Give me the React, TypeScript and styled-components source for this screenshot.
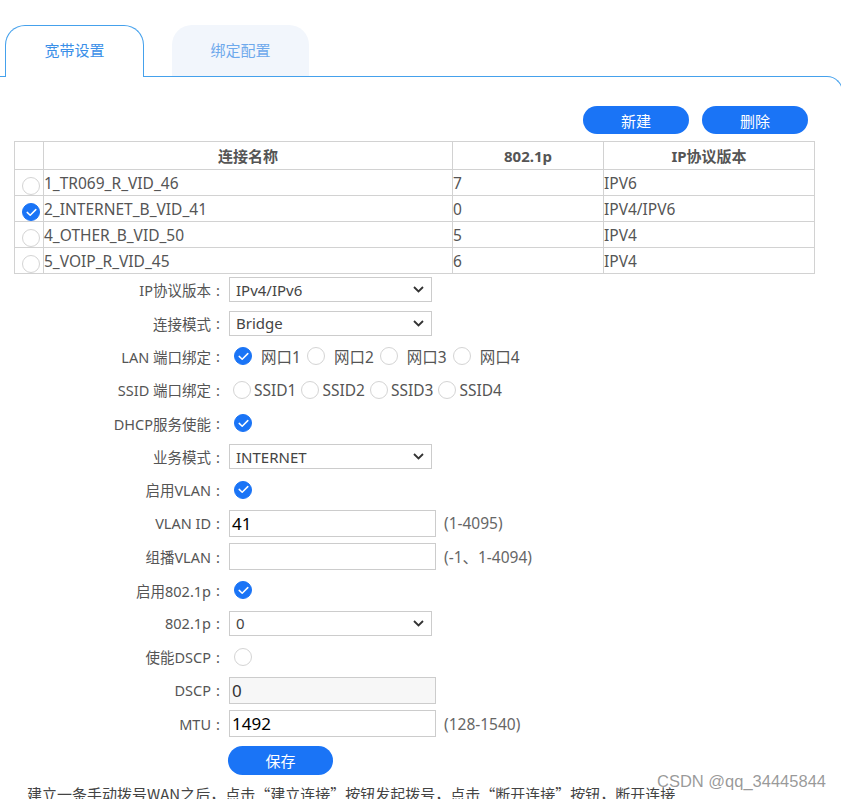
import * as React from 'react';
import styled, { createGlobalStyle } from 'styled-components';

const GlobalStyle = createGlobalStyle`
	html, body {
		margin: 0;
		padding: 0;
		background: #fff;
		overflow-x: hidden;
	}
	body {
		font-family: "Noto Sans", "Noto Sans CJK SC", sans-serif;
		font-size: 14px;
		color: #555;
	}
`;

const Page = styled.div`
	position: relative;
	padding-top: 25px;
	height: 799px;
	overflow: hidden;
`;

const TabBar = styled.div`
	display: flex;
	gap: 28px;
	padding-left: 5px;
	position: relative;
	z-index: 1;
	margin-bottom: -1px;
`;

const Tab = styled.div<{ active?: boolean }>`
	box-sizing: border-box;
	width: ${p => (p.active ? '139px' : '137px')};
	height: ${p => (p.active ? '52px' : '51px')};
	display: flex;
	align-items: center;
	justify-content: center;
	border-radius: 20px 20px 0 0;
	font-family: "Noto Sans CJK SC", sans-serif;
	font-size: 15px;
	color: ${p => (p.active ? '#3a8fe8' : '#6ea9ec')};
	background: ${p => (p.active ? '#fff' : '#f2f6fc')};
	border: ${p => (p.active ? '1px solid #45a1ec' : 'none')};
	border-bottom: none;
	padding-bottom: ${p => (p.active ? '4px' : '2px')};
`;

const Panel = styled.div`
	border-top: 1px solid #45a1ec;
	border-right: 1px solid #45a1ec;
	border-top-right-radius: 16px;
	margin-right: -2px;
	padding-top: 29px;
`;

const Toolbar = styled.div`
	display: flex;
	justify-content: flex-end;
	gap: 13px;
	padding-right: 34px;
`;

const BlueButton = styled.button`
	width: 106px;
	height: 28px;
	border: none;
	border-radius: 14px;
	background: #1a74f6;
	color: #fff;
	font-family: "Noto Sans CJK SC", sans-serif;
	font-size: 15px;
	padding: 0;
	cursor: pointer;
`;

const Table = styled.table`
	margin: 7px 0 0 14px;
	width: 800px;
	border-collapse: collapse;
	table-layout: fixed;
	color: #555;

	th, td {
		border: 1px solid #d2d2d2;
		padding: 0;
	}
	th {
		height: 27px;
		font-weight: bold;
		text-align: center;
		font-size: 15px;
	}
	td {
		height: 25px;
		text-align: left;
		font-size: 15.5px;
		vertical-align: middle;
	}
`;

const RadioCell = styled.td`
	vertical-align: bottom !important;
`;

const Circle = styled.span<{ checked?: boolean }>`
	box-sizing: border-box;
	display: inline-flex;
	align-items: center;
	justify-content: center;
	flex: none;
	width: 18px;
	height: 18px;
	border-radius: 50%;
	border: 1px solid ${p => (p.checked ? '#1a74f6' : '#d4d4d4')};
	background: ${p => (p.checked ? '#1a74f6' : '#fff')};
`;

const TableCircle = styled(Circle)`
	display: flex;
	margin: 0 0 0 7px;
`;

const Form = styled.div`
	display: flex;
	flex-direction: column;
	margin-top: -1px;
`;

const Row = styled.div`
	display: grid;
	grid-template-columns: 224px 1fr;
	column-gap: 5px;
	align-items: center;
	height: 33.38px;
`;

const Label = styled.div`
	display: flex;
	justify-content: flex-end;
	align-items: center;
	color: #555;
	font-size: 14.5px;
	white-space: nowrap;
`;

const Colon = styled.span`
	display: inline-block;
	width: 12px;
	text-align: center;
	margin-left: 1px;
`;

const Control = styled.div`
	display: flex;
	align-items: center;
`;

const SelectBox = styled.div`
	box-sizing: border-box;
	width: 203px;
	height: 25px;
	border: 1px solid #cccccc;
	display: flex;
	align-items: center;
	justify-content: space-between;
	padding: 0 7px 0 6px;
	font-size: 15px;
	color: #444;
	background: #fff;
`;

const TextInput = styled.div<{ disabled?: boolean }>`
	box-sizing: border-box;
	width: 207px;
	height: 27px;
	border: 1px solid #cccccc;
	background: ${p => (p.disabled ? '#f7f7f7' : '#fff')};
	display: flex;
	align-items: center;
	padding-left: 2px;
	font-size: 17px;
	color: ${p => (p.disabled ? '#333' : '#000')};
`;

const Hint = styled.span`
	margin-left: 8px;
	color: #666;
	font-size: 15.5px;
`;

const Options = styled.div<{ lead: number; textGap: number; itemGap: number }>`
	display: flex;
	align-items: center;
	padding-left: ${p => p.lead}px;
	gap: ${p => p.itemGap}px;

	label {
		display: flex;
		align-items: center;
		gap: ${p => p.textGap}px;
		color: #555;
		font-size: 15.5px;
	}
`;

const SaveRow = styled.div`
	padding: 6px 0 0 228px;
`;

const SaveButton = styled(BlueButton)`
	width: 105px;
	height: 29px;
	border-radius: 15px;
`;

const Note = styled.div`
	margin: 8px 0 0 27px;
	color: #444;
	font-family: "Noto Sans CJK SC", sans-serif;
	font-size: 15px;
	white-space: nowrap;
`;

const Watermark = styled.div`
	position: absolute;
	right: 15px;
	top: 772px;
	color: rgba(120, 120, 120, 0.75);
	font-family: "Liberation Sans", sans-serif;
	font-size: 16.5px;
`;

const Check = () => (
	<svg width="11" height="9" viewBox="0 0 11 9">
		<path d="M1.2 4.4 L4.2 7.2 L9.8 1.6" fill="none" stroke="#fff" strokeWidth="1.5" strokeLinecap="round" strokeLinejoin="round" />
	</svg>
);

const Chevron = () => (
	<svg width="11" height="7" viewBox="0 0 11 7">
		<path d="M1 1 L5.5 5.5 L10 1" fill="none" stroke="#333" strokeWidth="1.8" />
	</svg>
);

const Radio: React.FC<{ checked?: boolean }> = ({ checked }) => (
	<Circle checked={checked}>{checked && <Check />}</Circle>
);

const connections = [
	{ name: '1_TR069_R_VID_46', p: '7', ip: 'IPV6', checked: false },
	{ name: '2_INTERNET_B_VID_41', p: '0', ip: 'IPV4/IPV6', checked: true },
	{ name: '4_OTHER_B_VID_50', p: '5', ip: 'IPV4', checked: false },
	{ name: '5_VOIP_R_VID_45', p: '6', ip: 'IPV4', checked: false },
];

const FieldLabel: React.FC<{ text: string }> = ({ text }) => (
	<Label>
		{text}
		<Colon>:</Colon>
	</Label>
);

export default function App() {
	return (
		<Page>
			<GlobalStyle />
			<TabBar>
				<Tab active>宽带设置</Tab>
				<Tab>绑定配置</Tab>
			</TabBar>
			<Panel>
				<Toolbar>
					<BlueButton>新建</BlueButton>
					<BlueButton>删除</BlueButton>
				</Toolbar>
				<Table>
					<colgroup>
						<col style={{ width: 29 }} />
						<col style={{ width: 409 }} />
						<col style={{ width: 151 }} />
						<col style={{ width: 211 }} />
					</colgroup>
					<thead>
						<tr>
							<th></th>
							<th>连接名称</th>
							<th>802.1p</th>
							<th>IP协议版本</th>
						</tr>
					</thead>
					<tbody>
						{connections.map(c => (
							<tr key={c.name}>
								<RadioCell>
									<TableCircle checked={c.checked}>{c.checked && <Check />}</TableCircle>
								</RadioCell>
								<td>{c.name}</td>
								<td>{c.p}</td>
								<td>{c.ip}</td>
							</tr>
						))}
					</tbody>
				</Table>

				<Form>
					<Row>
						<FieldLabel text="IP协议版本" />
						<Control>
							<SelectBox>IPv4/IPv6<Chevron /></SelectBox>
						</Control>
					</Row>
					<Row>
						<FieldLabel text="连接模式" />
						<Control>
							<SelectBox>Bridge<Chevron /></SelectBox>
						</Control>
					</Row>
					<Row>
						<FieldLabel text="LAN 端口绑定" />
						<Control>
							<Options lead={5} textGap={9} itemGap={6}>
								{['网口1', '网口2', '网口3', '网口4'].map((n, i) => (
									<label key={n}>
										<Radio checked={i === 0} />
										{n}
									</label>
								))}
							</Options>
						</Control>
					</Row>
					<Row>
						<FieldLabel text="SSID 端口绑定" />
						<Control>
							<Options lead={4} textGap={3} itemGap={5}>
								{['SSID1', 'SSID2', 'SSID3', 'SSID4'].map(n => (
									<label key={n}>
										<Radio />
										{n}
									</label>
								))}
							</Options>
						</Control>
					</Row>
					<Row>
						<FieldLabel text="DHCP服务使能" />
						<Control>
							<Options lead={5} textGap={0} itemGap={0}>
								<Radio checked />
							</Options>
						</Control>
					</Row>
					<Row>
						<FieldLabel text="业务模式" />
						<Control>
							<SelectBox>INTERNET<Chevron /></SelectBox>
						</Control>
					</Row>
					<Row>
						<FieldLabel text="启用VLAN" />
						<Control>
							<Options lead={5} textGap={0} itemGap={0}>
								<Radio checked />
							</Options>
						</Control>
					</Row>
					<Row>
						<FieldLabel text="VLAN ID" />
						<Control>
							<TextInput>41</TextInput>
							<Hint>(1-4095)</Hint>
						</Control>
					</Row>
					<Row>
						<FieldLabel text="组播VLAN" />
						<Control>
							<TextInput></TextInput>
							<Hint>(-1、1-4094)</Hint>
						</Control>
					</Row>
					<Row>
						<FieldLabel text="启用802.1p" />
						<Control>
							<Options lead={5} textGap={0} itemGap={0}>
								<Radio checked />
							</Options>
						</Control>
					</Row>
					<Row>
						<FieldLabel text="802.1p" />
						<Control>
							<SelectBox>0<Chevron /></SelectBox>
						</Control>
					</Row>
					<Row>
						<FieldLabel text="使能DSCP" />
						<Control>
							<Options lead={5} textGap={0} itemGap={0}>
								<Radio />
							</Options>
						</Control>
					</Row>
					<Row>
						<FieldLabel text="DSCP" />
						<Control>
							<TextInput disabled>0</TextInput>
						</Control>
					</Row>
					<Row>
						<FieldLabel text="MTU" />
						<Control>
							<TextInput>1492</TextInput>
							<Hint>(128-1540)</Hint>
						</Control>
					</Row>
				</Form>
				<SaveRow>
					<SaveButton>保存</SaveButton>
				</SaveRow>
				<Note>建立一条手动拨号WAN之后，点击“建立连接”按钮发起拨号，点击“断开连接”按钮，断开连接</Note>
			</Panel>
			<Watermark>CSDN @qq_34445844</Watermark>
		</Page>
	);
}
